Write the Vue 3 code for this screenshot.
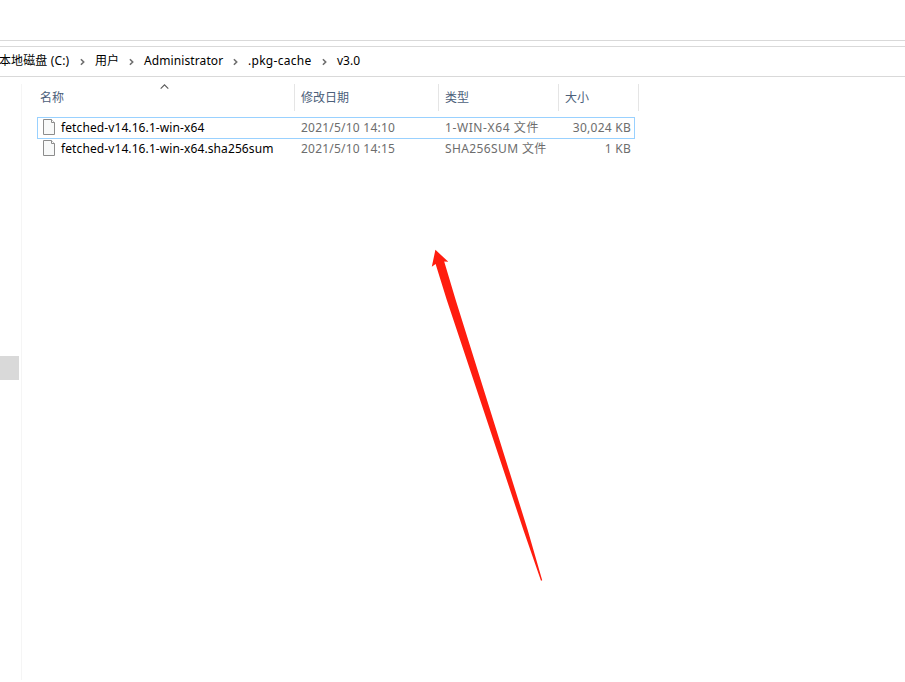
<template>
  <div class="explorer">
    <!-- 地址栏 -->
    <div class="toolbar"></div>
    <div class="address-bar">
      <template v-for="(item, index) in crumbs" :key="item.name">
        <svg v-if="index > 0" class="crumb-arrow" width="5" height="8" viewBox="0 0 5 8">
          <path d="M0.9 1.2 L3.7 4 L0.9 6.8" />
        </svg>
        <span class="crumb" :class="item.cls">{{ item.name }}</span>
      </template>
    </div>

    <div class="main">
      <!-- 左侧导航 -->
      <div class="nav-pane">
        <div class="nav-selected"></div>
      </div>

      <!-- 文件列表 -->
      <div class="file-pane">
        <div class="list-header">
          <div class="head col-name">
            <span>名称</span>
            <svg class="sort-icon" width="9" height="6" viewBox="0 0 9 6">
              <path d="M0.7 4.7 L4.5 0.9 L8.3 4.7" />
            </svg>
          </div>
          <div class="head col-date">修改日期</div>
          <div class="head col-type">类型</div>
          <div class="head col-size">大小</div>
        </div>

        <div
          v-for="file in files"
          :key="file.name"
          class="file-row"
          :class="{ focused: file.name === focusedName }"
          @click="focusedName = file.name"
        >
          <svg class="file-icon" width="12" height="16" viewBox="0 0 12 16">
            <path class="paper" d="M0.5 0.5 H8.5 L11.5 3.5 V15.5 H0.5 Z" />
            <path class="fold" d="M8.5 0.5 V3.5 H11.5" />
          </svg>
          <div class="name">{{ file.name }}</div>
          <div class="date">{{ file.date }}</div>
          <div class="type"><span :class="file.cls">{{ file.type }}</span></div>
          <div class="size">{{ file.size }}</div>
        </div>
      </div>
    </div>

    <!-- 标注箭头 -->
    <svg class="mark-arrow" width="905" height="682" viewBox="0 0 905 682">
      <path d="M435.4 249.8 L448.3 261.8 L444.2 261.4 L455.7 300 L527.7 530 L542.2 580.3 L541 580.7 L523.4 530 L446.8 300 L435.6 264 L431.8 266.8 Z" />
    </svg>
  </div>
</template>

<script setup>
import { ref } from 'vue'

const crumbs = [
  { name: '本地磁盘 (C:)', cls: 'disk' },
  { name: '用户', cls: 'users' },
  { name: 'Administrator', cls: 'admin' },
  { name: '.pkg-cache', cls: 'cache' },
  { name: 'v3.0', cls: 'version' }
]

const files = [
  { name: 'fetched-v14.16.1-win-x64', date: '2021/5/10 14:10', type: '1-WIN-X64 文件', size: '30,024 KB', cls: 'wide' },
  { name: 'fetched-v14.16.1-win-x64.sha256sum', date: '2021/5/10 14:15', type: 'SHA256SUM 文件', size: '1 KB', cls: '' }
]

const focusedName = ref(files[0].name)
</script>

<style>
body {
  margin: 0;
  background-color: #ffffff;
}
</style>

<style scoped>
.explorer {
  position: relative;
  display: flex;
  flex-direction: column;
  width: 905px;
  height: 682px;
  overflow: hidden;
  background-color: #ffffff;
  color: #000000;
  font-family: "Noto Sans", "Noto Sans CJK SC", sans-serif;
  font-size: 12px;
  line-height: 20px;
  white-space: nowrap;
}

.toolbar {
  box-sizing: border-box;
  height: 41px;
  border-bottom: 1px solid #d9d9d9;
}

.address-bar {
  box-sizing: border-box;
  display: flex;
  align-items: center;
  height: 31px;
  margin-top: 5px;
  padding-bottom: 1px;
  border-top: 1px solid #d9d9d9;
  border-bottom: 1px solid #d9d9d9;
}

.crumb {
  box-sizing: border-box;
}

.disk {
  width: 80px;
  margin-left: -1px;
  letter-spacing: 0.12px;
}

.users {
  width: 33px;
}

.admin {
  width: 88px;
  letter-spacing: 0.1px;
}

.cache {
  width: 73px;
  letter-spacing: 0.28px;
}

.crumb-arrow {
  flex-shrink: 0;
  margin: 1px 10px 0 1px;
  fill: none;
  stroke: #6e6e6e;
  stroke-width: 1.6;
}

.main {
  display: flex;
  flex: 1;
}

.nav-pane {
  box-sizing: border-box;
  width: 22px;
  height: 596px;
  margin-top: 7px;
  padding-top: 272px;
  border-right: 1px solid #f5f5f5;
}

.nav-selected {
  width: 19px;
  height: 24px;
  background-color: #d9d9d9;
}

.file-pane {
  width: 617px;
  padding-top: 7px;
}

.list-header {
  display: flex;
  height: 27px;
  margin-bottom: 6px;
  color: #4c607a;
}

.head {
  box-sizing: border-box;
  padding: 4px 0 0 6px;
  border-right: 1px solid #e5e5e5;
}

.col-name {
  position: relative;
  width: 273px;
  padding-left: 18px;
}

.sort-icon {
  position: absolute;
  top: 0;
  left: 138px;
  fill: none;
  stroke: #5a5a5a;
  stroke-width: 1.1;
}

.col-date {
  width: 144px;
}

.col-type {
  width: 120px;
}

.col-size {
  width: 80px;
}

.file-row {
  box-sizing: border-box;
  display: flex;
  align-items: center;
  width: 598px;
  height: 22px;
  margin-left: 15px;
  margin-bottom: -1px;
  padding: 0 3px 0 5px;
  border: 1px solid transparent;
  color: #6d6d6d;
}

.file-row.focused {
  border-color: #99d1ff;
}

.file-icon {
  width: 12px;
  margin: 0 6px 2px 0;
}

.paper {
  fill: #f8f9f9;
  stroke: #8c8c8c;
}

.fold {
  fill: #ffffff;
  stroke: #8c8c8c;
}

.name {
  width: 240px;
  color: #000000;
  letter-spacing: 0.1px;
}

.date {
  width: 144px;
  letter-spacing: 0.22px;
}

.type {
  width: 114px;
  letter-spacing: 0.38px;
}

.type .wide {
  letter-spacing: 0.6px;
}

.size {
  flex: 1;
  text-align: right;
  letter-spacing: 0.25px;
}

.mark-arrow {
  position: absolute;
  top: 0;
  left: 0;
  pointer-events: none;
  fill: #ff1d0f;
}
</style>
